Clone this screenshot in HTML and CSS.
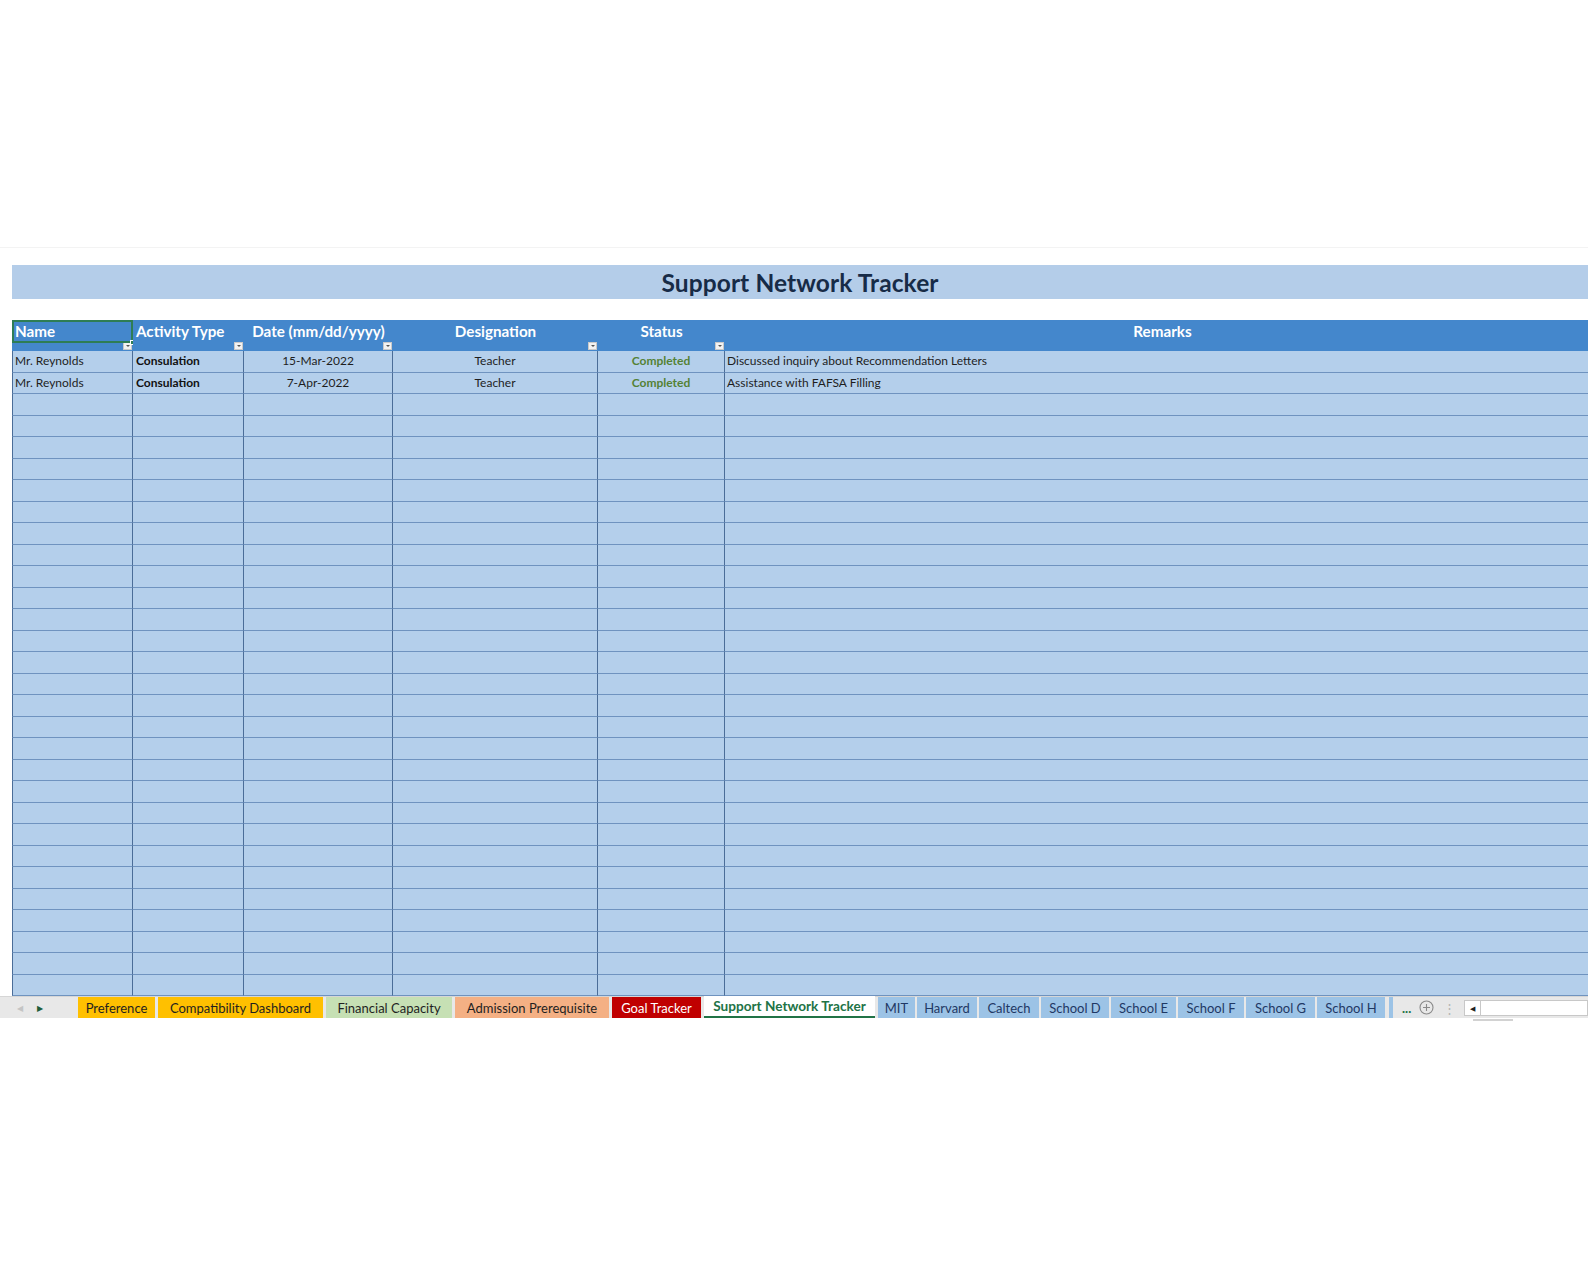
FILE: index.html
```html
<!DOCTYPE html>
<html>
<head>
<meta charset="utf-8">
<link rel="stylesheet" href="styles.css">
</head>
<body>
<div class="page">
  <div class="top-blank"></div>
  <div class="sheet">
    <div class="title-band"><h1 class="title">Support Network Tracker</h1></div>
    <div class="grid-wrap">
      <div class="grid">
        <div class="hcell left">Name<span class="fbtn"></span><span class="active-cell"><span class="handle"></span></span></div>
        <div class="hcell left">Activity Type<span class="fbtn"></span></div>
        <div class="hcell">Date (mm/dd/yyyy)<span class="fbtn"></span></div>
        <div class="hcell">Designation<span class="fbtn"></span></div>
        <div class="hcell">Status<span class="fbtn"></span></div>
        <div class="hcell">Remarks<span class="fbtn last"></span></div>

        <div class="cell first">Mr. Reynolds</div>
        <div class="cell bold">Consulation</div>
        <div class="cell center">15-Mar-2022</div>
        <div class="cell center">Teacher</div>
        <div class="cell center status">Completed</div>
        <div class="cell remark">Discussed inquiry about Recommendation Letters</div>

        <div class="cell first">Mr. Reynolds</div>
        <div class="cell bold">Consulation</div>
        <div class="cell center">7-Apr-2022</div>
        <div class="cell center">Teacher</div>
        <div class="cell center status">Completed</div>
        <div class="cell remark">Assistance with FAFSA Filling</div>
      </div>
      <div class="grid empty" id="empty"></div>
    </div>
    <div class="tabbar">
      <div class="nav">
        <span class="arrow prev">&#9664;</span>
        <span class="arrow next">&#9654;</span>
      </div>
      <div class="tabs">
        <span class="tab amber t-pref">Preference</span>
        <span class="tab amber t-comp">Compatibility Dashboard</span>
        <span class="tab green t-fin">Financial Capacity</span>
        <span class="tab salmon t-adm">Admission Prerequisite</span>
        <span class="tab red t-goal">Goal Tracker</span>
        <span class="tab active t-sup">Support Network Tracker</span>
        <div class="school-tabs">
          <span class="tab blue t-mit">MIT</span>
          <span class="tab blue t-60">Harvard</span>
          <span class="tab blue t-60">Caltech</span>
          <span class="tab blue t-68">School D</span>
          <span class="tab blue t-65">School E</span>
          <span class="tab blue t-66">School F</span>
          <span class="tab blue t-69">School G</span>
          <span class="tab blue t-68">School H</span>
          <span class="tab-sep"></span>
        </div>
      </div>
      <span class="more">...</span>
      <span class="add">
        <svg width="15" height="15" viewBox="0 0 15 15"><circle cx="7.5" cy="7.5" r="6.5" fill="none" stroke="#8a8a8a" stroke-width="1.1"/><path d="M7.5 4v7M4 7.5h7" stroke="#8a8a8a" stroke-width="1.1"/></svg>
      </span>
      <span class="vdots">&#8942;</span>
      <div class="hscroll"><span class="sarrow">&#9664;</span></div>
    </div>
    <div class="thumb-line"></div>
  </div>
</div>
<script src="app.js"></script>
</body>
</html>
```
FILE: app.js
```js
(function () {
  var g = document.getElementById('empty');
  var html = '';
  for (var r = 0; r < 30; r++) {
    html += '<div class="cell first"></div><div class="cell"></div><div class="cell"></div><div class="cell"></div><div class="cell"></div><div class="cell remark"></div>';
  }
  g.innerHTML = html;
})();
```
FILE: styles.css
```css
* { box-sizing: border-box; }
html, body { margin: 0; padding: 0; background: #ffffff; }
body { font-family: Lato, "Open Sans", "Liberation Sans", sans-serif; width: 1588px; height: 1270px; overflow: hidden; }

.top-blank { height: 248px; border-bottom: 1px solid #f3f3f3; }

.sheet { position: relative; }

.title-band {
  margin: 17px 0 0 12px;
  height: 34px;
  background: #b4cde9;
  display: flex;
  align-items: center;
  justify-content: center;
}
.title {
  margin: 0;
  font-size: 24.5px;
  font-weight: 700;
  color: #172b47;
  letter-spacing: 0.1px;
}

.grid-wrap {
  margin: 21px 0 0 12px;
  height: 676px;
  overflow: hidden;
}
.grid {
  display: grid;
  grid-template-columns: 121px 111px 149px 205px 127px 875px;
}

.hcell {
  position: relative;
  height: 31px;
  background: #4487cc;
  color: #ffffff;
  font-weight: 700;
  font-size: 15.2px;
  line-height: 18px;
  text-align: center;
  padding-top: 2px;
  white-space: nowrap;
}
.hcell.left { text-align: left; padding-left: 3px; }
.fbtn {
  position: absolute;
  right: 1px;
  bottom: 1px;
  width: 9px;
  height: 8px;
  background: #f2f2f2;
  border: 1px solid #c9c9c9;
}
.fbtn::after {
  content: "";
  position: absolute;
  left: 2px;
  top: 2px;
  border-left: 2px solid transparent;
  border-right: 2px solid transparent;
  border-top: 2px solid #555;
}
.fbtn.last { right: -8px; }
.active-cell {
  position: absolute;
  left: 0;
  top: 0;
  width: 121px;
  height: 23px;
  border: 2px solid #2e7d55;
}
.handle {
  position: absolute;
  right: -4px;
  bottom: -4px;
  width: 5px;
  height: 5px;
  background: #2e7d55;
  border: 1px solid #fff;
}

.cell {
  height: 21.5px;
  background: #b4cfeb;
  border-right: 1px solid #4b6d98;
  border-bottom: 1px solid #6f93bf;
  font-size: 12px;
  color: #1e1e1e;
  line-height: 20px;
  padding: 0 3px;
  white-space: nowrap;
  overflow: hidden;
}
.cell.first { border-left: 1px solid #4b6d98; padding-left: 2px; }
.cell.bold { font-weight: 700; color: #111; }
.cell.center { text-align: center; }
.cell.status { font-weight: 700; color: #548235; }
.cell.remark { border-right: none; padding-left: 2px; }

.tabbar {
  position: absolute;
  left: 0;
  top: 731px;
  width: 1588px;
  height: 22px;
  background: #e8e8e8;
  border-top: 1px solid #d6d6d6;
  display: flex;
  align-items: stretch;
  font-size: 13px;
}
.nav {
  width: 78px;
  display: flex;
  align-items: center;
  gap: 14px;
  padding-left: 17px;
}
.arrow { font-size: 8px; }
.arrow.prev { color: #c4c4c4; }
.arrow.next { color: #1e5d3a; }
.tabs { display: flex; gap: 3px; }
.school-tabs { display: flex; gap: 2px; }
.tab {
  display: flex;
  align-items: center;
  justify-content: center;
  flex: none;
  white-space: nowrap;
  color: #1f1f1f;
  height: 21px;
}
.t-pref { width: 77px; }
.t-comp { width: 165px; }
.t-fin { width: 126px; }
.t-adm { width: 154px; }
.t-goal { width: 89px; }
.t-sup { width: 171px; }
.t-mit { width: 37px; }
.t-60 { width: 60px; }
.t-65 { width: 65px; }
.t-66 { width: 66px; }
.t-68 { width: 68px; }
.t-69 { width: 69px; }
.tab.amber { background: #ffc000; }
.tab.green { background: #c6e0b4; }
.tab.salmon { background: #f4b084; }
.tab.red { background: #c00000; color: #ffffff; }
.tab.active {
  background: #ffffff;
  color: #217346;
  font-weight: 700;
  font-size: 13.6px;
  border-bottom: 2px solid #217346;
  height: 22px;
  margin-top: -1px;
}
.tab.blue { background: #9cc3e6; color: #1f3864; }
.tab-sep { width: 4px; background: #9cc3e6; margin-left: 2px; }
.more { margin-left: 9px; color: #217346; font-weight: 700; display: flex; align-items: center; }
.add { margin-left: 8px; display: flex; align-items: center; }
.vdots { margin-left: 9px; color: #b5b5b5; display: flex; align-items: center; font-size: 13px; }
.hscroll {
  margin-left: 8px;
  flex: 1;
  background: #ffffff;
  border: 1px solid #c8c8c8;
  margin-top: 3px;
  margin-bottom: 2px;
  display: flex;
  align-items: center;
}
.sarrow {
  width: 16px;
  font-size: 7px;
  color: #222;
  border-right: 1px solid #c8c8c8;
  height: 100%;
  display: flex;
  align-items: center;
  justify-content: center;
}
.thumb-line {
  position: absolute;
  left: 1473px;
  top: 754px;
  width: 40px;
  height: 2px;
  background: #d2d2d2;
}
```
